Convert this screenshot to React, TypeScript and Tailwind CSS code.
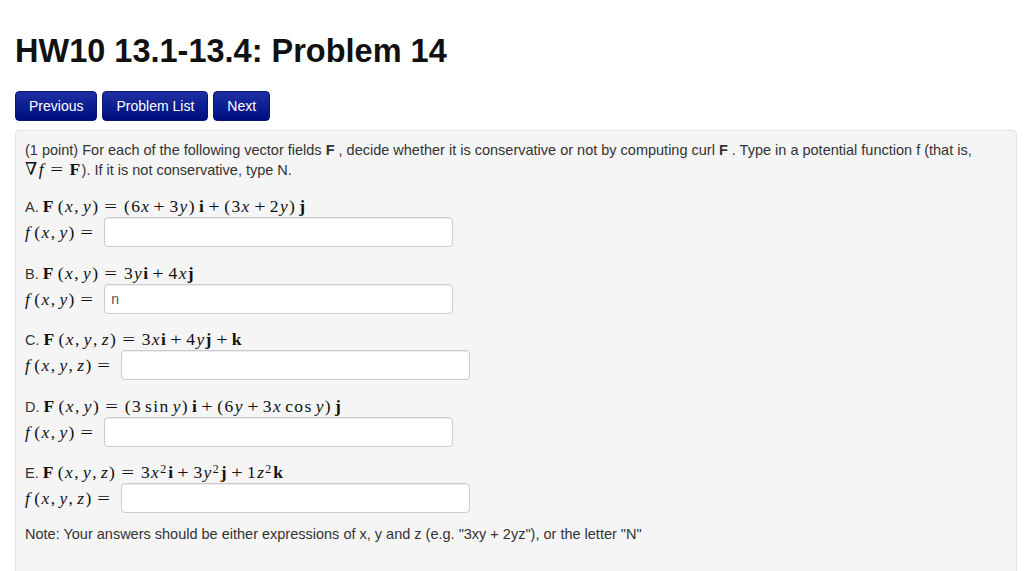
import React from 'react';

const serif = { fontFamily: '"Liberation Serif", "DejaVu Serif", serif' };

function V({ children }: { children: React.ReactNode }) {
  return <span className="italic">{children}</span>;
}
function B({ children }: { children: React.ReactNode }) {
  return <span className="font-bold">{children}</span>;
}
function Op({ children }: { children: React.ReactNode }) {
  return <span className="mx-[0.22em] inline-block scale-x-[1.15]">{children}</span>;
}
function Eq() {
  return <span className="mx-[0.38em] inline-block scale-x-[1.3]">=</span>;
}
function Sup({ children }: { children: React.ReactNode }) {
  return <span className="relative top-[-0.45em] text-[12px] mr-[0.05em]">{children}</span>;
}
function Gap() {
  return <span className="ml-[0.17em]" />;
}

function Math({ children }: { children: React.ReactNode }) {
  return (
    <span className="text-[17.5px] leading-[16px] tracking-[0.08em] text-[#111] whitespace-nowrap" style={serif}>
      {children}
    </span>
  );
}

function Args({ z }: { z?: boolean }) {
  return (
    <>
      <Gap />(<V>x</V>,<Gap />
      <V>y</V>
      {z && (
        <>
          ,<Gap />
          <V>z</V>
        </>
      )}
      )
    </>
  );
}

function Item({
  letter,
  field,
  z,
  value,
}: {
  letter: string;
  field: React.ReactNode;
  z?: boolean;
  value?: string;
}) {
  return (
    <div className="mb-[16.5px]">
      <div className="h-[20px] leading-[20px] whitespace-nowrap">
        {letter}.{' '}
        <Math>
          <B>F</B>
          <Args z={z} />
          <Eq />
          {field}
        </Math>
      </div>
      <div className="flex items-center h-[30px]">
        <Math>
          <V>f</V>
          <Args z={z} />
          <Eq />
        </Math>
        <input
          readOnly
          value={value ?? ''}
          className="ml-[4px] w-[349px] h-[30px] px-[6px] bg-white border border-[#cccccc] rounded-[4px] text-[14px] text-[#555] outline-none shadow-[inset_0_1px_1px_rgba(0,0,0,0.075)]"
        />
      </div>
    </div>
  );
}

export default function App() {
  return (
    <div
      className="min-h-screen bg-white text-[#333] pl-[15px] pr-[7px] pt-[31px] overflow-hidden"
      style={{ fontFamily: '"Liberation Sans", Arial, sans-serif' }}
    >
      <h1 className="text-[32.5px] leading-[40px] font-bold text-[#111]">HW10 13.1-13.4: Problem 14</h1>

      <div className="flex gap-[5px] mt-[20px]">
        {['Previous', 'Problem List', 'Next'].map((b) => (
          <button
            key={b}
            className="h-[30px] px-[13px] text-[14px] text-white rounded-[4px] border border-[#0b166e] bg-gradient-to-b from-[#1e2fa2] to-[#000b7e]"
          >
            {b}
          </button>
        ))}
      </div>

      <div className="mt-[9px] bg-[#f5f5f5] border border-[#e3e3e3] rounded-[4px] p-[9px] pb-[40px] text-[14.5px] leading-[20px]">
        <p>
          (1 point) For each of the following vector fields <B>F</B> , decide whether it is conservative or not by
          computing curl <B>F</B> . Type in a potential function f (that is,
          <br />
          <Math>
            ∇<V>f</V>
            <Eq />
            <B>F</B>
          </Math>
          ). If it is not conservative, type N.
        </p>

        <div className="mt-[17px]">
          <Item
            letter="A"
            field={
              <>
                (6<V>x</V>
                <Op>+</Op>3<V>y</V>)<Gap />
                <B>i</B>
                <Op>+</Op>(3<V>x</V>
                <Op>+</Op>2<V>y</V>)<Gap />
                <B>j</B>
              </>
            }
          />
          <Item
            letter="B"
            value="n"
            field={
              <>
                3<V>y</V>
                <B>i</B>
                <Op>+</Op>4<V>x</V>
                <B>j</B>
              </>
            }
          />
          <Item
            letter="C"
            z
            field={
              <>
                3<V>x</V>
                <B>i</B>
                <Op>+</Op>4<V>y</V>
                <B>j</B>
                <Op>+</Op>
                <B>k</B>
              </>
            }
          />
          <Item
            letter="D"
            field={
              <>
                (3<Gap />
                sin<Gap />
                <V>y</V>)<Gap />
                <B>i</B>
                <Op>+</Op>(6<V>y</V>
                <Op>+</Op>3<V>x</V>
                <Gap />
                cos<Gap />
                <V>y</V>)<Gap />
                <B>j</B>
              </>
            }
          />
          <Item
            letter="E"
            z
            field={
              <>
                3<V>x</V>
                <Sup>2</Sup>
                <B>i</B>
                <Op>+</Op>3<V>y</V>
                <Sup>2</Sup>
                <B>j</B>
                <Op>+</Op>1<V>z</V>
                <Sup>2</Sup>
                <B>k</B>
              </>
            }
          />
        </div>

        <p className="mt-[-6px]">
          Note: Your answers should be either expressions of x, y and z (e.g. "3xy + 2yz"), or the letter "N"
        </p>
      </div>
    </div>
  );
}
